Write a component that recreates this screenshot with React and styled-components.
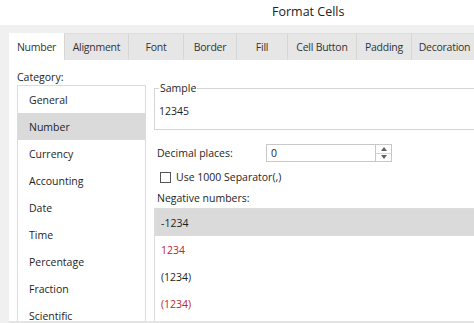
import React from 'react'
import styled, { createGlobalStyle } from 'styled-components'

const Global = createGlobalStyle`
  body {
    margin: 0;
    background: #ffffff;
    font-family: "Open Sans", "Noto Sans", sans-serif;
    color: #1e1e1e;
  }
`

const Window = styled.div`
  width: 474px;
  height: 323px;
  overflow: hidden;
  background: #ffffff;
`

const TitleBar = styled.div`
  height: 23px;
  padding: 0 0 2px 272px;
  display: flex;
  align-items: center;
  font-size: 12.5px;
  color: #222;
  background: #fff;
`

const Body = styled.div`
  background: #f0f0f0;
  padding: 8px 0 0 9px;
  height: 298px;
  box-sizing: border-box;
  width: 500px;
`

const TabRow = styled.div`
  display: flex;
  height: 27px;
`

const Tab = styled.div`
  width: ${p => p.w}px;
  box-sizing: border-box;
  display: flex;
  align-items: center;
  justify-content: center;
  font-size: 10.5px;
  letter-spacing: -0.25px;
  color: #333;
  background: ${p => (p.active ? '#ffffff' : '#e6e6e6')};
  border-left: ${p => (p.active ? 'none' : '1px solid #d6d6d6')};
  border-top: ${p => (p.active ? 'none' : '1px solid #dedede')};
  border-bottom: ${p => (p.active ? 'none' : '1px solid #e6e6e6')};
`

const Panel = styled.div`
  background: #ffffff;
  display: flex;
  gap: 8px;
  padding: 8px 0 0 8px;
  height: 263px;
  box-sizing: border-box;
  border-bottom: 2px solid #e4e4e4;
`

const LeftCol = styled.div`
  width: 129px;
  display: flex;
  flex-direction: column;
`

const Label = styled.div`
  font-size: 10.5px;
  height: 17px;
  display: flex;
  align-items: center;
`

const ListBox = styled.div`
  border: 1px solid #dcdcdc;
  border-bottom: none;
  flex: 1;
  overflow: hidden;
  margin-top: ${p => p.mt || 0}px;
`

const Item = styled.div`
  height: 27px;
  display: flex;
  align-items: center;
  padding-left: ${p => p.pl}px;
  font-size: 10.5px;
  background: ${p => (p.selected ? '#dadada' : 'transparent')};
  color: ${p => (p.red ? '#c0272d' : '#1e1e1e')};
`

const RightCol = styled.div`
  flex: 1;
  display: flex;
  flex-direction: column;
  padding-top: 13px;
`

const Fieldset = styled.fieldset`
  margin: 0;
  padding: 0 0 0 4px;
  height: 49px;
  box-sizing: border-box;
  border: 1px solid #d4d4d4;
  border-right: none;
  font-size: 10.5px;

  legend {
    padding: 0 1px;
    margin-left: 0;
    font-size: 10.5px;
  }
`

const SampleValue = styled.div`
  padding-top: 9px;
`

const Row = styled.div`
  display: flex;
  align-items: center;
  height: 18px;
  margin-top: ${p => p.mt || 0}px;
  padding-left: ${p => p.pl || 0}px;
  font-size: 10.5px;
`

const FieldLabel = styled.span`
  width: 109px;
`

const Input = styled.div`
  width: 109px;
  height: 18px;
  box-sizing: border-box;
  border: 1px solid #c8c8c8;
  border-right: none;
  display: flex;
  align-items: center;
  padding-left: 4px;
`

const Spinner = styled.div`
  width: 17px;
  height: 18px;
  box-sizing: border-box;
  border: 1px solid #c8c8c8;
  display: flex;
  flex-direction: column;
`

const SpinBtn = styled.div`
  flex: 1;
  display: flex;
  align-items: center;
  justify-content: center;
  border-top: ${p => (p.bottom ? '1px solid #d8d8d8' : 'none')};
`

const Check = styled.span`
  width: 9px;
  height: 9px;
  border: 1px solid #555;
  margin-right: 5px;
  background: #fff;
`

const Arrow = ({ down }) => (
  <svg width="6" height="4" viewBox="0 0 6 4">
    <path d={down ? 'M0 0 L6 0 L3 4 Z' : 'M0 4 L6 4 L3 0 Z'} fill="#606060" />
  </svg>
)

const tabs = [
  ['Number', 55],
  ['Alignment', 64],
  ['Font', 55],
  ['Border', 53],
  ['Fill', 51],
  ['Cell Button', 69],
  ['Padding', 55],
  ['Decoration', 66],
]

const categories = ['General', 'Number', 'Currency', 'Accounting', 'Date', 'Time', 'Percentage', 'Fraction', 'Scientific']

const negatives = [
  { text: '-1234', selected: true },
  { text: '1234', red: true },
  { text: '(1234)' },
  { text: '(1234)', red: true },
]

export default function App() {
  return (
    <Window>
      <Global />
      <TitleBar>Format Cells</TitleBar>
      <Body>
        <TabRow>
          {tabs.map(([name, w], i) => (
            <Tab key={name} w={w} active={i === 0}>{name}</Tab>
          ))}
        </TabRow>
        <Panel>
          <LeftCol>
            <Label>Category:</Label>
            <ListBox>
              {categories.map(c => (
                <Item key={c} pl={11} selected={c === 'Number'}>{c}</Item>
              ))}
            </ListBox>
          </LeftCol>
          <RightCol>
            <Fieldset>
              <legend>Sample</legend>
              <SampleValue>12345</SampleValue>
            </Fieldset>
            <Row mt={14} pl={3}>
              <FieldLabel>Decimal places:</FieldLabel>
              <Input>0</Input>
              <Spinner>
                <SpinBtn><Arrow /></SpinBtn>
                <SpinBtn bottom><Arrow down /></SpinBtn>
              </Spinner>
            </Row>
            <Row mt={6} pl={6}>
              <Check />
              Use 1000 Separator(,)
            </Row>
            <Row mt={3} pl={3}>Negative numbers:</Row>
            <ListBox mt={1}>
              {negatives.map((n, i) => (
                <Item key={i} pl={6} selected={n.selected} red={n.red}>{n.text}</Item>
              ))}
            </ListBox>
          </RightCol>
        </Panel>
      </Body>
    </Window>
  )
}
